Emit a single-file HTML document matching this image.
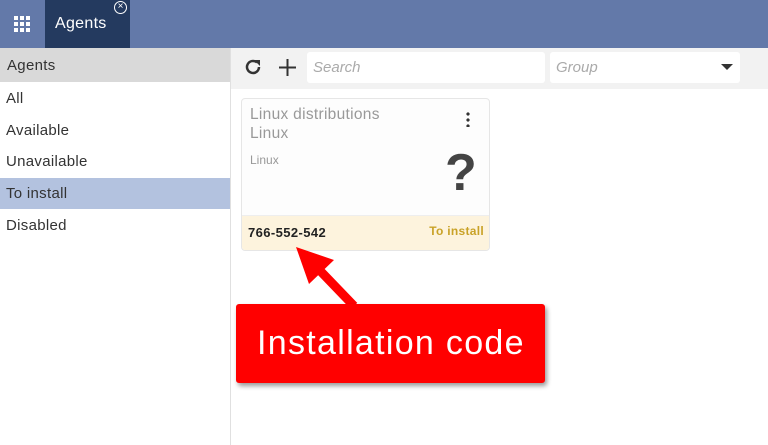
<!DOCTYPE html><html><head><style>
body{margin:0;width:768px;height:445px;overflow:hidden;font-family:"Liberation Sans",sans-serif;background:#fff;position:relative}
div{position:absolute;box-sizing:border-box}
</style></head><body>
<div style="left:0;top:0;width:768px;height:48px;background:#6379a9"></div>
<div style="left:45px;top:0;width:85px;height:48px;background:#243a5f;color:#fff;font-size:16px;line-height:48px;padding-left:10px;letter-spacing:.3px">Agents</div>
<div style="left:114px;top:1px;width:13px;height:13px;border:1.5px solid #fff;border-radius:50%;color:#fff;font-size:10px;line-height:10px;text-align:center">×</div>
<svg style="position:absolute;left:14px;top:16px" width="16" height="16" fill="#fff"><rect x="0" y="0" width="4" height="4"/><rect x="6" y="0" width="4" height="4"/><rect x="12" y="0" width="4" height="4"/><rect x="0" y="6" width="4" height="4"/><rect x="6" y="6" width="4" height="4"/><rect x="12" y="6" width="4" height="4"/><rect x="0" y="12" width="4" height="4"/><rect x="6" y="12" width="4" height="4"/><rect x="12" y="12" width="4" height="4"/></svg>
<div style="left:0;top:48px;width:231px;height:397px;border-right:1px solid #e0e0e0;background:#fff"></div>
<div style="left:0;top:48px;width:230px;height:34px;background:#d9d9d9;color:#333;font-size:15px;line-height:36px;padding-left:7px;letter-spacing:.3px">Agents</div>
<div style="left:0;top:178px;width:230px;height:31px;background:#b3c2df"></div>
<div style="left:6px;top:83px;font-size:15px;color:#333;line-height:31.7px;letter-spacing:.3px">All<br>Available<br>Unavailable<br>To install<br>Disabled</div>
<div style="left:231px;top:48px;width:537px;height:41px;background:#f2f2f2"></div>
<svg style="position:absolute;left:243px;top:57px" width="20" height="20" viewBox="0 0 20 20"><path d="M16 10a6 6 0 1 1-2-4.5" fill="none" stroke="#333" stroke-width="2.5"/><path d="M11 3h6v6z" fill="#333"/></svg>
<svg style="position:absolute;left:278px;top:58px" width="19" height="19"><path d="M9.5 1v17M1 9.5h17" stroke="#333" stroke-width="2"/></svg>
<div style="left:307px;top:52px;width:238px;height:31px;background:#fff;border-radius:3px;color:#aaa;font-style:italic;font-size:15px;line-height:31px;padding-left:6px">Search</div>
<div style="left:550px;top:52px;width:190px;height:31px;background:#fff;border-radius:3px;color:#aaa;font-style:italic;font-size:15px;line-height:31px;padding-left:6px">Group</div>
<div style="left:721px;top:64px;width:0;height:0;border-left:6px solid transparent;border-right:6px solid transparent;border-top:6px solid #333"></div>
<div style="left:241px;top:98px;width:249px;height:153px;border:1px solid #e6e6e6;border-radius:4px;background:#fdfdfd;overflow:hidden">
<div style="left:0;top:116px;width:249px;height:37px;background:#fdf3dd;border-top:1px solid #eee"></div>
<div style="left:8px;top:6px;color:#999;font-size:15.5px;line-height:19px;letter-spacing:.3px">Linux distributions<br>Linux</div>
<div style="left:8px;top:54px;color:#999;font-size:12px">Linux</div>
<div style="left:203px;top:44px;color:#444;font-size:52px;font-weight:bold;line-height:60px">?</div>
<div style="left:224px;top:12px;width:4px;height:16px;background:radial-gradient(circle,#333 1.6px,transparent 1.8px) 0 0/4px 6px"></div>
<div style="left:6px;top:126px;color:#222;font-size:13px;font-weight:bold;letter-spacing:.4px">766-552-542</div>
<div style="right:5px;top:125px;color:#c9a227;font-size:12px;font-weight:bold;letter-spacing:.3px">To install</div>
</div>
<svg style="position:absolute;left:290px;top:240px" width="80" height="70"><path d="M14 14L64 66" stroke="#f00" stroke-width="9"/><path d="M6 7L44 20L19 44Z" fill="#f00"/></svg>
<div style="left:236px;top:304px;width:309px;height:79px;background:#f00;border-radius:3px;box-shadow:2px 3px 5px rgba(0,0,0,.4);color:#fff;font-size:34px;line-height:79px;padding-left:21px;letter-spacing:1.3px">Installation code</div>
</body></html>
